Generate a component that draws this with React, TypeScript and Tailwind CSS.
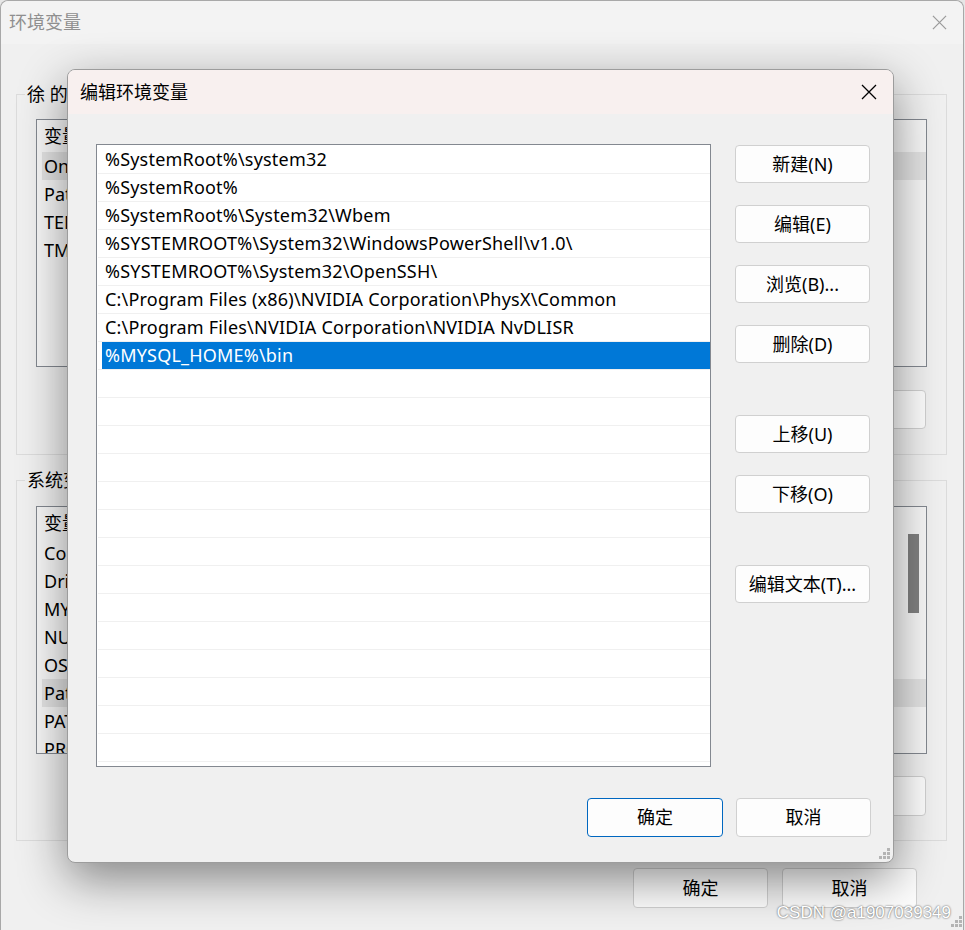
import React from 'react'

const PATHS = [
  '%SystemRoot%\\system32',
  '%SystemRoot%',
  '%SystemRoot%\\System32\\Wbem',
  '%SYSTEMROOT%\\System32\\WindowsPowerShell\\v1.0\\',
  '%SYSTEMROOT%\\System32\\OpenSSH\\',
  'C:\\Program Files (x86)\\NVIDIA Corporation\\PhysX\\Common',
  'C:\\Program Files\\NVIDIA Corporation\\NVIDIA NvDLISR',
  '%MYSQL_HOME%\\bin',
]
const SELECTED = 7
const EMPTY_ROWS = 15

const USER_VARS = [
  ['OneDrive', 'C:\\Users\\徐\\OneDrive'],
  ['Path', 'C:\\Users\\徐\\AppData\\Local\\Microsoft\\WindowsApps;'],
  ['TEMP', 'C:\\Users\\徐\\AppData\\Local\\Temp'],
  ['TMP', 'C:\\Users\\徐\\AppData\\Local\\Temp'],
]

const SYS_VARS = [
  ['ComSpec', 'C:\\WINDOWS\\system32\\cmd.exe'],
  ['DriverData', 'C:\\Windows\\System32\\Drivers\\DriverData'],
  ['MYSQL_HOME', 'D:\\mysql-8.0.31-winx64'],
  ['NUMBER_OF_PROCESSORS', '16'],
  ['OS', 'Windows_NT'],
  ['Path', 'C:\\WINDOWS\\system32;C:\\WINDOWS;C:\\WINDOWS\\System32\\Wbem;'],
  ['PATHEXT', '.COM;.EXE;.BAT;.CMD;.VBS;.VBE;.JS;.JSE;.WSF;.WSH;.MSC'],
  ['PROCESSOR_ARCHITECTURE', 'AMD64'],
]

function CloseIcon({ className }: { className: string }) {
  return (
    <svg viewBox="0 0 16 16" className={className} fill="none" stroke="currentColor" strokeWidth="1.3">
      <path d="M1 1L15 15M15 1L1 15" />
    </svg>
  )
}

function Grip() {
  return (
    <svg width="12" height="12" viewBox="0 0 12 12" className="text-[#b4b4b4]" fill="currentColor">
      <rect x="8" y="0" width="3" height="3" />
      <rect x="4" y="4" width="3" height="3" />
      <rect x="8" y="4" width="3" height="3" />
      <rect x="0" y="8" width="3" height="3" />
      <rect x="4" y="8" width="3" height="3" />
      <rect x="8" y="8" width="3" height="3" />
    </svg>
  )
}

function WinButton({ label, className = '' }: { label: string; className?: string }) {
  return (
    <button
      className={`flex items-center justify-center rounded-[4px] border border-[#d0d0d0] bg-[#fdfdfd] text-[18px] text-black ${className}`}
    >
      {label}
    </button>
  )
}

function VarList({ rows, selected }: { rows: string[][]; selected: number }) {
  return (
    <div className="relative h-[248px] w-[891px] overflow-hidden border border-[#838890] bg-[#f7f7f7]">
      <div className="flex h-[32px] items-center text-[18px]">
        <span className="w-[260px] pl-[7px]">变量</span>
        <span className="pl-[7px]">值</span>
      </div>
      {rows.map(([k, v], i) => (
        <div
          key={k}
          className={`ml-[5px] flex h-[28px] items-center text-[18px] ${i === selected ? 'bg-[#e3e3e3]' : ''}`}
        >
          <span className="w-[255px] pl-[2px]">{k}</span>
          <span className="truncate pl-[7px]">{v}</span>
        </div>
      ))}
    </div>
  )
}

export default function App() {
  return (
    <div className="relative h-[930px] w-[965px] overflow-hidden bg-[#e6e6e6] font-['Noto_Sans','Noto_Sans_CJK_SC',sans-serif] text-black">
      {/* main window: 环境变量 */}
      <div className="h-[930px] w-[964px] rounded-t-[8px] border-l border-r border-t border-[#a8a8a8] bg-[#f0f0f0]">
        <div className="flex h-[43px] items-center justify-between rounded-t-[8px] bg-[#f3f3f3] pl-[8px] pr-[16px]">
          <span className="text-[18px] text-[#8f8f8f]">环境变量</span>
          <CloseIcon className="h-[15px] w-[15px] text-[#9a9a9a]" />
        </div>

        <fieldset className="ml-[15px] mt-[38px] h-[373px] w-[930px] border border-[#dcdcdc] px-[19px]">
          <legend className="ml-[-11px] px-[2px] text-[18px] leading-[24px]">徐 的用户变量(U)</legend>
          <div className="mt-[13px]">
            <VarList rows={USER_VARS} selected={0} />
          </div>
          <div className="mt-[23px] flex justify-end gap-[13px] pr-[1px]">
            <WinButton label="新建(N)..." className="h-[39px] w-[135px]" />
            <WinButton label="编辑(E)..." className="h-[39px] w-[135px]" />
            <WinButton label="删除(D)" className="h-[39px] w-[135px]" />
          </div>
        </fieldset>

        <fieldset className="ml-[15px] mt-[13px] h-[373px] w-[930px] border border-[#dcdcdc] px-[19px]">
          <legend className="ml-[-11px] px-[2px] text-[18px] leading-[24px]">系统变量(S)</legend>
          <div className="relative mt-[14px]">
            <VarList rows={SYS_VARS} selected={5} />
            <div className="absolute right-[8px] top-[28px] h-[79px] w-[11px] bg-[#808080]" />
          </div>
          <div className="mt-[22px] flex justify-end gap-[13px] pr-[1px]">
            <WinButton label="新建(W)..." className="h-[40px] w-[135px]" />
            <WinButton label="编辑(I)..." className="h-[40px] w-[135px]" />
            <WinButton label="删除(L)" className="h-[40px] w-[135px]" />
          </div>
        </fieldset>

        <div className="mt-[27px] flex justify-end gap-[14px] pr-[46px]">
          <WinButton label="确定" className="h-[40px] w-[135px]" />
          <WinButton label="取消" className="h-[40px] w-[135px]" />
        </div>
      </div>

      <div className="absolute bottom-[2px] right-[2px]">
        <Grip />
      </div>

      {/* dialog: 编辑环境变量 */}
      <div className="absolute left-[67px] top-[69px] flex h-[794px] w-[827px] flex-col overflow-hidden rounded-[8px] border border-[#9c9c9c] bg-[#f0f0f0] shadow-[0_16px_48px_rgba(0,0,0,0.45)]">
        <div className="flex h-[44px] shrink-0 items-center justify-between bg-[#f8f0ef] pl-[12px] pr-[16px]">
          <span className="text-[18px]">编辑环境变量</span>
          <CloseIcon className="h-[16px] w-[16px] text-black" />
        </div>

        <div className="flex pl-[28px] pt-[30px]">
          <div className="h-[623px] w-[615px] shrink-0 overflow-hidden border border-[#838890] bg-white pt-[1px]">
            {PATHS.map((p, i) => (
              <div key={p} className="ml-[1px] h-[28px] border-b border-[#f0f0f0]">
                <div
                  className={`ml-[4px] flex h-full items-center whitespace-nowrap pl-[3px] text-[18px] tracking-[0.2px] ${
                    i === SELECTED ? 'bg-[#0078d7] text-white' : ''
                  }`}
                >
                  {p}
                </div>
              </div>
            ))}
            {Array.from({ length: EMPTY_ROWS }).map((_, i) => (
              <div key={i} className="ml-[1px] h-[28px] border-b border-[#f0f0f0]" />
            ))}
          </div>

          <div className="ml-[24px] flex flex-col pt-[1px]">
            <WinButton label="新建(N)" className="h-[38px] w-[135px]" />
            <WinButton label="编辑(E)" className="mt-[22px] h-[38px] w-[135px]" />
            <WinButton label="浏览(B)..." className="mt-[22px] h-[38px] w-[135px]" />
            <WinButton label="删除(D)" className="mt-[22px] h-[38px] w-[135px]" />
            <WinButton label="上移(U)" className="mt-[52px] h-[38px] w-[135px]" />
            <WinButton label="下移(O)" className="mt-[22px] h-[38px] w-[135px]" />
            <WinButton label="编辑文本(T)..." className="mt-[52px] h-[38px] w-[135px]" />
          </div>
        </div>

        <div className="mt-[31px] flex justify-end gap-[13px] pr-[22px]">
          <WinButton label="确定" className="h-[39px] w-[136px] !border-[#0067c0]" />
          <WinButton label="取消" className="h-[39px] w-[135px]" />
        </div>

        <div className="absolute bottom-[2px] right-[2px]">
          <Grip />
        </div>
      </div>

      <div className="absolute bottom-[7px] right-[14px] text-[17px] leading-[20px] text-white [text-shadow:0_0_2px_rgba(0,0,0,0.75)] font-['Liberation_Sans',sans-serif]">
        CSDN @a1907039349
      </div>
    </div>
  )
}
